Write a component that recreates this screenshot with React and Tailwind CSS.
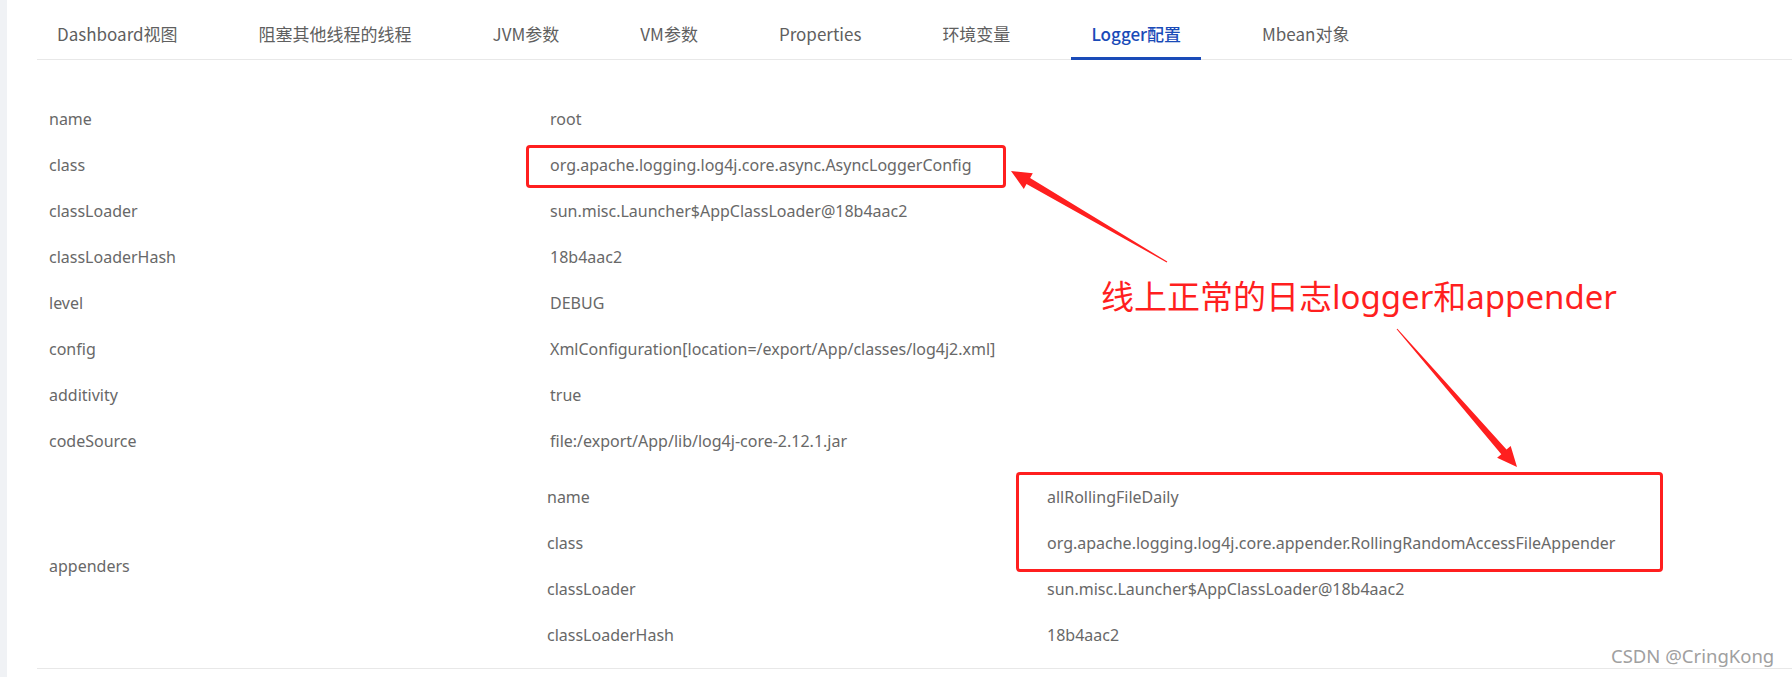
import React from "react";

const tabs = [
  "Dashboard视图",
  "阻塞其他线程的线程",
  "JVM参数",
  "VM参数",
  "Properties",
  "环境变量",
  "Logger配置",
  "Mbean对象",
];

const rows = [
  ["name", "root"],
  ["class", "org.apache.logging.log4j.core.async.AsyncLoggerConfig"],
  ["classLoader", "sun.misc.Launcher$AppClassLoader@18b4aac2"],
  ["classLoaderHash", "18b4aac2"],
  ["level", "DEBUG"],
  ["config", "XmlConfiguration[location=/export/App/classes/log4j2.xml]"],
  ["additivity", "true"],
  ["codeSource", "file:/export/App/lib/log4j-core-2.12.1.jar"],
];

const appenders = [
  ["name", "allRollingFileDaily"],
  ["class", "org.apache.logging.log4j.core.appender.RollingRandomAccessFileAppender"],
  ["classLoader", "sun.misc.Launcher$AppClassLoader@18b4aac2"],
  ["classLoaderHash", "18b4aac2"],
];

const font = { fontFamily: '"Noto Sans", "Noto Sans CJK SC", sans-serif' };
const tabFont = { fontFamily: '"Noto Sans CJK SC", sans-serif' };

export default function App() {
  return (
    <div
      className="relative flex w-[1792px] h-[677px] overflow-hidden bg-white text-[16px] text-[#686868]"
      style={font}
    >
      {/* left page strip */}
      <div className="w-[7px] shrink-0 bg-[#f0f2f5]" />

      <div className="flex-1 pl-[30px]">
        {/* tabs */}
        <div className="flex border-b border-[#e8e8e8]" style={tabFont}>
          {tabs.map((t) => {
            const active = t === "Logger配置";
            return (
              <div
                key={t}
                className={`-mb-px mr-[41px] flex h-[60px] items-center border-b-[3px] px-[20px] pt-[10px] text-[17px] whitespace-nowrap ${
                  active
                    ? "border-[#1a4bb8] font-medium text-[#1a4bb8]"
                    : "border-transparent text-[#5f5f5f]"
                }`}
              >
                {t}
              </div>
            );
          })}
        </div>

        {/* logger table */}
        <div className="mt-[36px] border-b border-[#e8e8e8]">
          {rows.map(([k, v]) => (
            <div key={k} className="flex h-[46px] items-center">
              <div className="w-[501px] pl-[12px]">{k}</div>
              <div className="pl-[12px] whitespace-nowrap">{v}</div>
            </div>
          ))}
          <div className="flex items-center">
            <div className="w-[501px] pl-[12px]">appenders</div>
            <div className="py-[10px]">
              {appenders.map(([k, v]) => (
                <div key={k} className="flex h-[46px] items-center">
                  <div className="w-[500px] pl-[9px]">{k}</div>
                  <div className="pl-[9px] whitespace-nowrap">{v}</div>
                </div>
              ))}
            </div>
          </div>
        </div>
      </div>

      {/* annotations */}
      <div className="absolute left-[526px] top-[145px] h-[43px] w-[480px] rounded-[4px] border-[3px] border-[#ff1f1f]" />
      <div className="absolute left-[1016px] top-[472px] h-[100px] w-[647px] rounded-[4px] border-[3px] border-[#ff1f1f]" />
      <svg
        className="pointer-events-none absolute left-0 top-0"
        width="1792"
        height="677"
        viewBox="0 0 1792 677"
      >
        <polygon
          fill="#ff1f1f"
          points="1167.3,261.6 1030.1,178.1 1032.8,173.3 1011,171 1023.8,188.9 1026.5,184.1 1166.7,262.4"
        />
        <polygon
          fill="#ff1f1f"
          points="1396.6,329.3 1501.3,454.2 1497.1,457.8 1517,467 1510.7,446 1506.5,449.6 1397.4,328.7"
        />
      </svg>
      <div className="absolute left-[1101px] top-[274px] text-[33px] leading-[46px] whitespace-nowrap text-[#ff1f1f]">
        线上正常的日志logger和appender
      </div>
      <div className="absolute left-[1611px] top-[644px] text-[18.5px] leading-[24px] whitespace-nowrap text-[#a0a0a0]">
        CSDN @CringKong
      </div>
    </div>
  );
}
